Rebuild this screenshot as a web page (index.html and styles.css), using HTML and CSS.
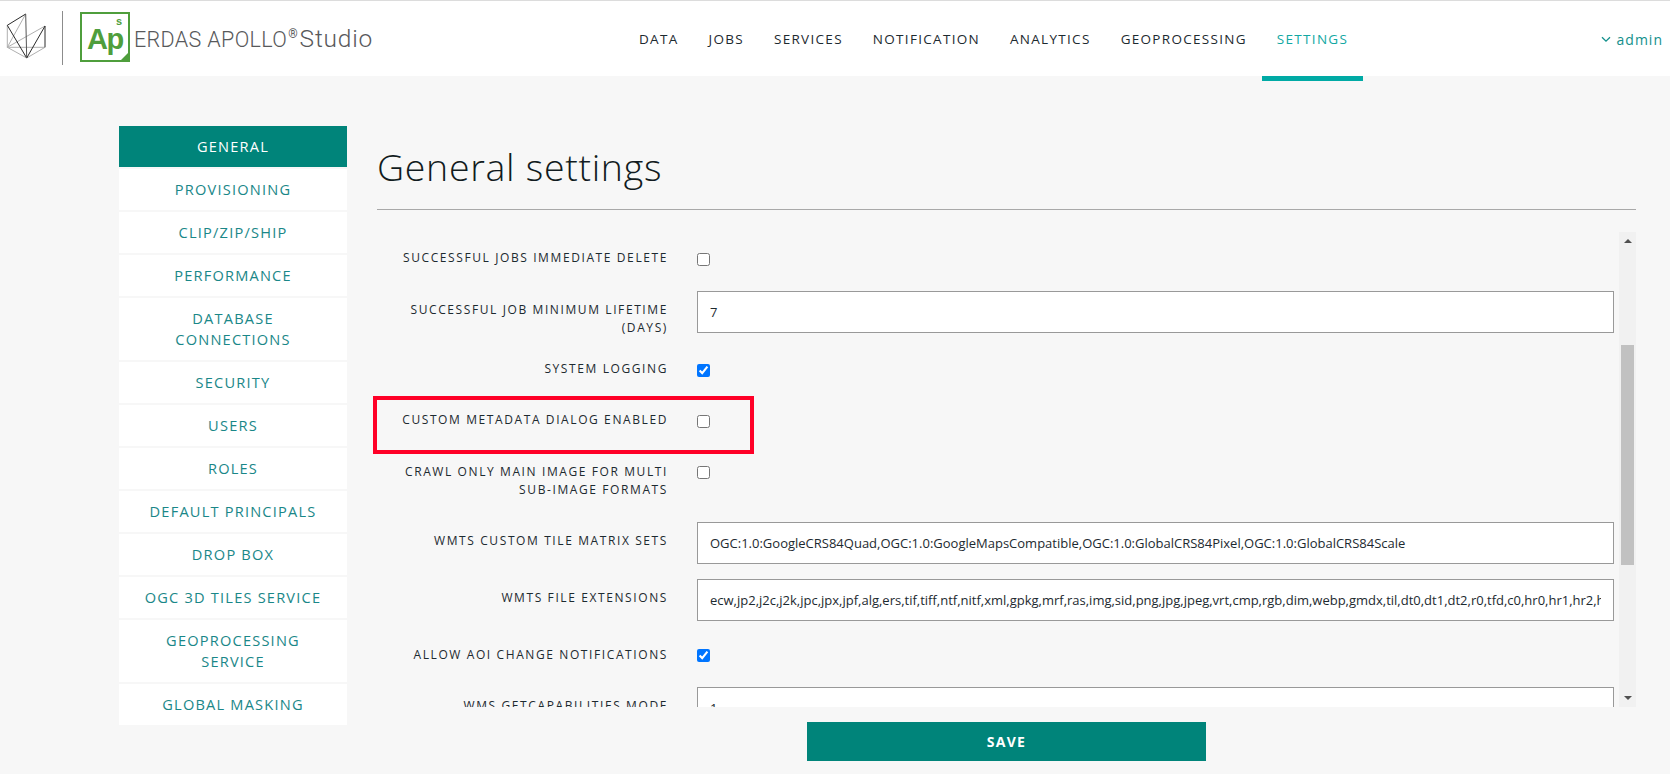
FILE: index.html
```html
<!DOCTYPE html>
<html lang="en">
<head>
<meta charset="utf-8">
<title>ERDAS APOLLO Studio</title>
<link rel="stylesheet" href="styles.css">
</head>
<body>
<header class="topbar">
  <div class="logo">
    <svg class="hex" width="46" height="50" viewBox="0 0 46 50" fill="none">
      <g stroke="#b0b0b0" stroke-width="1">
        <path d="M6.3 12.3V34.3L25.7 45L44 34.3H6.3L24.7 1M6.3 34.3L44 13"/>
      </g>
      <g stroke="#2b2b2b" stroke-width="1">
        <path d="M6.3 12.3L24.7 1M6.3 12.3L25.7 45L44 13M44 13V34.3"/>
      </g>
      <path d="M24.7 1L25.7 45" stroke="#555" stroke-width="1"/>
    </svg>
    <span class="logo-divider"></span>
    <div class="app-box">
      <span class="app-s">s</span>
      <span class="app-name">Ap</span>
      <span class="app-corner"></span>
    </div>
    <div class="product"><span class="erdas">ERDAS APOLLO</span><sup class="reg">®</sup><span class="studio">Studio</span></div>
  </div>
  <nav class="mainnav">
    <a class="nav-item">DATA</a>
    <a class="nav-item">JOBS</a>
    <a class="nav-item">SERVICES</a>
    <a class="nav-item">NOTIFICATION</a>
    <a class="nav-item">ANALYTICS</a>
    <a class="nav-item">GEOPROCESSING</a>
    <a class="nav-item active">SETTINGS</a>
  </nav>
  <div class="user">
    <svg width="10" height="7" viewBox="0 0 10 7" fill="none"><path d="M1 1.2L5 5.2L9 1.2" stroke="#12908c" stroke-width="1.3"/></svg>
    <span>admin</span>
  </div>
</header>

<main class="page">
  <aside class="sidebar">
    <a class="side-item active">GENERAL</a>
    <a class="side-item">PROVISIONING</a>
    <a class="side-item">CLIP/ZIP/SHIP</a>
    <a class="side-item">PERFORMANCE</a>
    <a class="side-item">DATABASE CONNECTIONS</a>
    <a class="side-item">SECURITY</a>
    <a class="side-item">USERS</a>
    <a class="side-item">ROLES</a>
    <a class="side-item">DEFAULT PRINCIPALS</a>
    <a class="side-item">DROP BOX</a>
    <a class="side-item">OGC 3D TILES SERVICE</a>
    <a class="side-item">GEOPROCESSING SERVICE</a>
    <a class="side-item">GLOBAL MASKING</a>
  </aside>

  <section class="content">
    <h1 class="title">General settings</h1>
    <div class="panel">
      <form class="settings">
        <label class="row check"><span class="lbl">Successful jobs immediate delete</span><input type="checkbox"></label>
        <label class="row"><span class="lbl">Successful job minimum lifetime (days)</span><input class="field" type="text" value="7"></label>
        <label class="row check"><span class="lbl">System logging</span><input type="checkbox" checked></label>
        <label class="row check"><span class="lbl">Custom metadata dialog enabled</span><input type="checkbox"></label>
        <label class="row check two"><span class="lbl">Crawl only main image for multi sub-image formats</span><input type="checkbox"></label>
        <label class="row"><span class="lbl">WMTS custom tile matrix sets</span><input class="field" type="text" value="OGC:1.0:GoogleCRS84Quad,OGC:1.0:GoogleMapsCompatible,OGC:1.0:GlobalCRS84Pixel,OGC:1.0:GlobalCRS84Scale"></label>
        <label class="row"><span class="lbl">WMTS file extensions</span><input class="field" type="text" value="ecw,jp2,j2c,j2k,jpc,jpx,jpf,alg,ers,tif,tiff,ntf,nitf,xml,gpkg,mrf,ras,img,sid,png,jpg,jpeg,vrt,cmp,rgb,dim,webp,gmdx,til,dt0,dt1,dt2,r0,tfd,c0,hr0,hr1,hr2,hr3,hr4"></label>
        <label class="row check tight"><span class="lbl">Allow AOI change notifications</span><input type="checkbox" checked></label>
        <label class="row"><span class="lbl">WMS GetCapabilities mode</span><input class="field" type="text" value="1"></label>
      </form>
      <div class="scrollbar">
        <span class="arrow up"></span>
        <span class="thumb"></span>
        <span class="arrow down"></span>
      </div>
      <div class="callout"></div>
    </div>
    <button class="save" type="button">SAVE</button>
  </section>
</main>
</body>
</html>
```
FILE: styles.css
```css
* { box-sizing: border-box; }
html, body { margin: 0; height: 100%; overflow: hidden; }
body {
  background: #f7f7f7;
  font-family: "Open Sans", "Noto Sans", sans-serif;
  color: #1d2a30;
}

/* top bar */
.topbar {
  display: flex;
  align-items: flex-start;
  height: 76px;
  background: #fff;
  border-top: 1px solid #dcdcdc;
}
.logo { display: flex; align-items: flex-start; width: 624px; flex: none; }
.hex { margin: 12px 0 0 1px; flex: none; }
.logo-divider { width: 1px; height: 54px; margin: 10px 0 0 15px; background: #8c8c8c; flex: none; }
.app-box {
  position: relative;
  width: 50px;
  height: 50px;
  margin: 11px 0 0 17px;
  border: 2px solid #4f9e3c;
  flex: none;
  overflow: hidden;
}
.app-name {
  position: absolute;
  left: 5px;
  top: 14px;
  font: bold 29px/22px "Liberation Sans", sans-serif;
  letter-spacing: -1.5px;
  color: #4f9e3c;
}
.app-s {
  position: absolute;
  left: 34px;
  top: 3px;
  font: bold 11px/8px "Liberation Sans", sans-serif;
  color: #4f9e3c;
}
.app-corner {
  position: absolute;
  right: 0;
  bottom: 0;
  border-style: solid;
  border-width: 0 0 7px 7px;
  border-color: transparent transparent #4f9e3c transparent;
}
.product {
  display: flex;
  align-items: flex-start;
  margin: 25px 0 0 4px;
  color: #58595b;
  font-family: Roboto, sans-serif;
  white-space: nowrap;
}
.erdas { font-size: 21.5px; line-height: 28px; font-weight: 300; letter-spacing: 0.35px; }
.reg { font-size: 12px; line-height: 16px; margin: 0 2px 0 1px; }
.studio { font-size: 24.5px; line-height: 26px; font-weight: 300; letter-spacing: 0.8px; }

.mainnav { display: flex; flex: none; }
.nav-item {
  display: block;
  height: 80px;
  padding: 28px 15px 0;
  font-size: 13.5px;
  line-height: 20px;
  letter-spacing: 1.3px;
  color: #1d2a30;
}
.nav-item.active { color: #12a8a3; border-bottom: 5px solid #00aaa5; }
.user {
  display: flex;
  align-items: center;
  gap: 6px;
  margin: 28px 0 0 auto;
  padding-right: 7px;
  height: 20px;
  font-size: 14px;
  letter-spacing: 1px;
  color: #12908c;
}

/* page */
.page { display: flex; align-items: flex-start; gap: 30px; padding: 50px 34px 0 119px; }

.sidebar { display: flex; flex-direction: column; gap: 2px; width: 228px; flex: none; }
.side-item {
  display: block;
  padding: 10px 20px;
  background: #fff;
  text-align: center;
  font-size: 14.6px;
  line-height: 21px;
  letter-spacing: 1.2px;
  color: #1a8788;
}
.side-item.active { background: #00847a; color: #fff; }

.content { flex: 1; min-width: 0; display: flex; flex-direction: column; align-items: center; }
.title {
  align-self: stretch;
  height: 84px;
  margin: 0 0 22px;
  padding-top: 16px;
  border-bottom: 1px solid #a9a9a9;
  font-size: 37.5px;
  line-height: 50px;
  font-weight: 300;
  letter-spacing: 0.7px;
  color: #111b20;
}

.panel { position: relative; display: flex; align-self: stretch; gap: 5px; height: 475px; }
.settings {
  flex: 1;
  min-width: 0;
  display: grid;
  grid-template-rows: 54px 57px 51px 51px 72px 57px 57px 51px 57px;
  padding-top: 5px;
  overflow: hidden;
}
.row { display: flex; align-items: flex-start; gap: 29px; }
.lbl {
  width: 291px;
  flex: none;
  padding-top: 10px;
  text-align: right;
  text-transform: uppercase;
  font-size: 12px;
  line-height: 18px;
  letter-spacing: 1.6px;
  color: #1d2a30;
}
.row.check .lbl { padding-top: 12px; }
.row.two .lbl { padding-top: 13px; }
.row.tight .lbl { padding-top: 10px; }
.row input[type="checkbox"] { width: 13px; height: 13px; margin: 16px 0 0; flex: none; }
.row.tight input[type="checkbox"] { margin-top: 13px; }
.field {
  flex: 1;
  min-width: 0;
  height: 42px;
  padding: 0 12px 1px;
  border: 1px solid #999;
  border-radius: 0;
  outline: 0;
  background: #fff;
  font-family: "Open Sans", sans-serif;
  font-size: 13px;
  color: #1d2a30;
}

.scrollbar {
  position: relative;
  width: 17px;
  flex: none;
  background: #f1f1f1;
}
.thumb { position: absolute; left: 2px; top: 113px; width: 13px; height: 220px; background: #c1c1c1; }
.arrow { position: absolute; left: 5px; width: 0; height: 0; border-left: 4px solid transparent; border-right: 4px solid transparent; }
.arrow.up { top: 7px; border-bottom: 4px solid #505050; }
.arrow.down { bottom: 7px; border-top: 4px solid #505050; }

.callout {
  position: absolute;
  left: -4px;
  top: 164px;
  width: 381px;
  height: 58px;
  border: 4px solid #ff0027;
  pointer-events: none;
}

.save {
  width: 399px;
  height: 39px;
  margin-top: 15px;
  border: 0;
  background: #00847a;
  color: #fff;
  font-family: "Open Sans", sans-serif;
  font-size: 14px;
  font-weight: 700;
  letter-spacing: 1.3px;
}
```
